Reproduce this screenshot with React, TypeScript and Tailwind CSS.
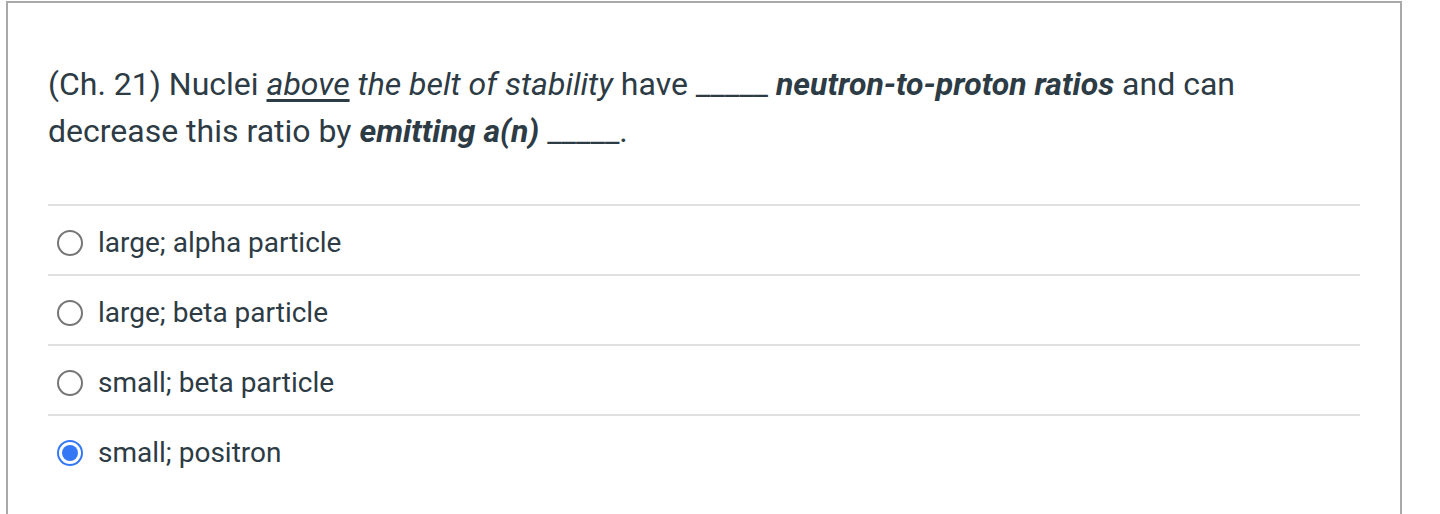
const options = [
    { label: 'large; alpha particle', checked: false },
    { label: 'large; beta particle', checked: false },
    { label: 'small; beta particle', checked: false },
    { label: 'small; positron', checked: true },
];

function Radio({ checked }: { checked: boolean }) {
    if (checked) {
        return (
            <span className="flex h-[26px] w-[26px] shrink-0 items-center justify-center rounded-full border-2 border-[#3478f6] bg-white">
                <span className="h-[16px] w-[16px] rounded-full bg-[#3478f6]" />
            </span>
        );
    }
    return (
        <span className="h-[26px] w-[26px] shrink-0 rounded-full border-2 border-[#767676] bg-white" />
    );
}

export default function App() {
    return (
        <div className="min-h-screen bg-white pl-[6px] pt-[1px] font-['Roboto',sans-serif] text-[#2d3b45]">
            <div className="h-[530px] w-[1396px] border-x-2 border-t-2 border-[#a9a9a9] px-[40px] pt-[58px]">
                <div className="w-[1312px]">
                    <p className="text-[32px] leading-[47px]">
                        (Ch. 21) Nuclei <em className="underline underline-offset-[4px]">above</em>{' '}
                        <em>the belt of stability</em> have _____{' '}
                        <strong className="font-bold italic">neutron-to-proton ratios</strong> and can
                        decrease this ratio by{' '}
                        <strong className="font-bold italic">emitting a(n)</strong> _____.
                    </p>

                    <div className="mt-[49px]">
                        {options.map((opt) => (
                            <div key={opt.label} className="border-t-2 border-[#e0e0e0]">
                                <label className="flex h-[68px] items-center gap-[15px] pl-[9px] pt-[5px] text-[28px]">
                                    <Radio checked={opt.checked} />
                                    <span>{opt.label}</span>
                                </label>
                            </div>
                        ))}
                    </div>
                </div>
            </div>
        </div>
    );
}
